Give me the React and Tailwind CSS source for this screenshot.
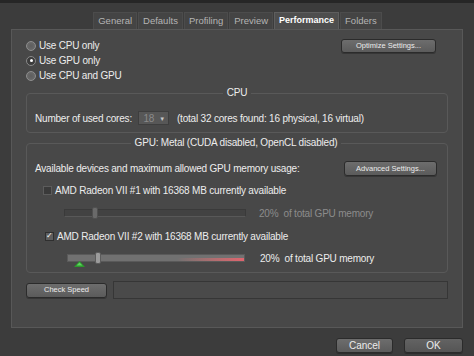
import React from 'react';

const FONT = { fontFamily: '"Liberation Sans", Arial, sans-serif' };

const TABS = ['General', 'Defaults', 'Profiling', 'Preview', 'Performance', 'Folders'];

const Btn = ({ children, className = '' }) => (
    <div className={`flex items-center justify-center rounded-[3px] border border-[#2b2b2b] bg-linear-to-b from-[#6d6d6d] to-[#5b5b5b] text-[#ececec] shadow-[0_1px_0_rgba(0,0,0,0.25)] ${className}`}>
        {children}
    </div>
);

const Radio = ({ checked, label }) => (
    <div className="flex items-center gap-[3px] h-[15px]">
        {checked ? (
            <div className="w-[10px] h-[10px] rounded-full border border-[#8a8a8a] bg-[#3c3c3c] flex items-center justify-center">
                <div className="w-[3px] h-[3px] rounded-full bg-white" />
            </div>
        ) : (
            <div className="w-[10px] h-[10px] rounded-full border border-[#8e8e8e] bg-radial from-[#5e5e5e] to-[#6e6e6e]" />
        )}
        <span>{label}</span>
    </div>
);

const Slider = ({ active }) => (
    <div className="relative w-full h-[14px] flex items-center">
        {active ? (
            <div className="w-full h-[8px] flex flex-col border border-[#5a5a5a]">
                <div className="h-[3px] bg-[#717171]" />
                <div className="flex-1 bg-linear-to-r from-[#717171] from-[62%] to-[#e0646e]" />
            </div>
        ) : (
            <div className="w-full h-[8px] bg-[#424242] border border-[#3a3a3a] border-b-[#585858]" />
        )}
        {/* knob */}
        <div className={`absolute left-[28px] top-[1px] w-[6px] h-[12px] rounded-[2px] ${active ? 'bg-[#9c9c9c] border border-[#5c5c5c]' : 'bg-[#6a6a6a] border border-[#505050]'}`} />
        {active && (
            <svg className="absolute left-[7px] top-[10px]" width="11" height="6" viewBox="0 0 11 6">
                <polygon points="5.5,0 11,6 0,6" fill="#2c9a2c" />
                <polygon points="5.5,1.5 8.5,4.5 2.5,4.5" fill="#5fd25f" />
            </svg>
        )}
    </div>
);

const App = () => {
    return (
        <div className="w-[474px] h-[356px] bg-[#3c3c3c] text-[#ededed] text-[10px] tracking-[-0.2px] flex flex-col overflow-hidden" style={FONT}>
            {/* window edge */}
            <div className="h-[3px] bg-[#262626]" />

            {/* Tabs */}
            <div className="mt-[9px] flex justify-center h-[17px]">
                {TABS.map(t => (
                    <div
                        key={t}
                        className={`flex items-center justify-center px-[4px] ml-px border-t border-x text-[9.5px] tracking-normal ${t === 'Performance'
                            ? 'bg-[#4e4e4e] border-[#5e5e5e] text-white font-bold text-[9px]'
                            : 'bg-[#444444] border-[#4c4c4c] text-[#b4b4b4]'}`}
                    >
                        {t}
                    </div>
                ))}
            </div>

            {/* Panel */}
            <div className="mx-[11px] h-[299px] border border-[#585858] bg-[#484848] px-[14px] pt-[8px] flex flex-col">
                {/* Mode */}
                <div className="flex justify-between pr-[12px]">
                    <div className="flex flex-col">
                        <Radio label="Use CPU only" />
                        <Radio checked label="Use GPU only" />
                        <Radio label="Use CPU and GPU" />
                    </div>
                    <Btn className="w-[95px] h-[14px] mt-px text-[7.5px] tracking-normal">Optimize Settings...</Btn>
                </div>

                {/* CPU */}
                <fieldset className="mt-[4px] border border-[#595959] rounded-[4px] px-[8px] pt-[12px] pb-[7px]">
                    <legend className="mx-auto px-[4px] leading-[12px]">CPU</legend>
                    <div className="flex items-center h-[14px]">
                        <span>Number of used cores:</span>
                        <div className="ml-[6px] w-[31px] h-[14px] border border-[#3e3e3e] bg-[#575757] flex items-center justify-end pr-[3px] gap-[5px] text-[#8a8a8a]">
                            <span>18</span>
                            <span className="text-[6px] text-[#c8c8c8] mt-[3px]">▼</span>
                        </div>
                        <span className="ml-[8px]">(total 32 cores found: 16 physical, 16 virtual)</span>
                    </div>
                </fieldset>

                {/* GPU */}
                <fieldset className="mt-[4px] border border-[#595959] rounded-[4px] pl-[8px] pr-[10px] pt-[12px] pb-[7px]">
                    <legend className="mx-auto px-[4px] leading-[12px]">GPU: Metal (CUDA disabled, OpenCL disabled)</legend>
                    <div className="flex items-center justify-between h-[15px]">
                        <span>Available devices and maximum allowed GPU memory usage:</span>
                        <Btn className="w-[93px] h-[15px] text-[7.5px] tracking-normal">Advanced Settings...</Btn>
                    </div>

                    <div className="mt-[7px] pl-[8px] flex items-center gap-[3px] h-[14px]">
                        <div className="w-[9px] h-[9px] border border-[#5c5c5c] bg-[#3a3a3a]" />
                        <span>AMD Radeon VII #1 with 16368 MB currently available</span>
                    </div>

                    <div className="mt-[9px] pl-[29px] flex items-center h-[14px]">
                        <div className="w-[182px]"><Slider /></div>
                        <span className="ml-[13px] whitespace-pre text-[#8c8c8c]">20%  of total GPU memory</span>
                    </div>

                    <div className="mt-[9px] pl-[10px] flex items-center gap-[3px] h-[14px]">
                        <div className="w-[9px] h-[9px] border border-[#2f2f2f] bg-[#5e5e5e] flex items-center justify-center text-white text-[8px] leading-none">✓</div>
                        <span>AMD Radeon VII #2 with 16368 MB currently available</span>
                    </div>

                    <div className="mt-[8px] pl-[32px] flex items-center h-[14px]">
                        <div className="w-[178px]"><Slider active /></div>
                        <span className="ml-[15px] whitespace-pre">20%  of total GPU memory</span>
                    </div>
                </fieldset>

                {/* Check speed */}
                <div className="mt-[8px] flex items-center gap-[6px] h-[18px]">
                    <Btn className="w-[81px] h-[15px] text-[7.5px] tracking-normal">Check Speed</Btn>
                    <div className="flex-1 h-[18px] border border-[#363636] bg-[#4a4a4a]" />
                </div>
            </div>

            {/* Dialog buttons */}
            <div className="mt-[10px] mr-[11px] flex justify-end gap-[11px]">
                <Btn className="w-[57px] h-[15px] tracking-normal">Cancel</Btn>
                <Btn className="w-[59px] h-[15px] tracking-normal border-[#1c1c1c] from-[#636363] to-[#555555]">OK</Btn>
            </div>
        </div>
    );
};

export default App;
